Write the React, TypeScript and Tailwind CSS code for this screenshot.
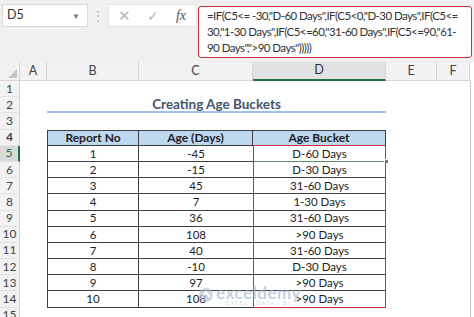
import React from 'react';

const FONT = { fontFamily: 'Lato, "Open Sans", sans-serif' };

const rows: [number, number, string][] = [
  [1, -45, 'D-60 Days'],
  [2, -15, 'D-30 Days'],
  [3, 45, '31-60 Days'],
  [4, 7, '1-30 Days'],
  [5, 36, '31-60 Days'],
  [6, 108, '>90 Days'],
  [7, 40, '31-60 Days'],
  [8, -10, 'D-30 Days'],
  [9, 97, '>90 Days'],
  [10, 108, '>90 Days'],
];

function RowHead({ n, active }: { n: number; active?: boolean }) {
  return (
    <div
      className={
        'w-[20px] shrink-0 flex items-center justify-center text-[12px] border-b border-[#e1e1e1] ' +
        (active
          ? 'bg-[#d9d9d9] border-r-2 border-r-[#217346] text-[#217346]'
          : 'bg-[#f2f2f2] border-r border-r-[#d4d4d4] text-[#444]')
      }
    >
      {n}
    </div>
  );
}

function ColHead({ label, w, active }: { label: string; w: string; active?: boolean }) {
  return (
    <div
      className={
        w +
        ' shrink-0 flex items-center justify-center text-[12.5px] border-r border-[#d4d4d4] ' +
        (active ? 'bg-[#e1e1e1] border-b-2 border-b-[#217346] text-[#333]' : 'bg-[#f2f2f2] border-b border-b-[#d4d4d4] text-[#444]')
      }
    >
      {label}
    </div>
  );
}

function Blank({ w }: { w: string }) {
  return <div className={w + ' shrink-0'} />;
}

export default function App() {
  return (
    <div className="w-[474px] h-[317px] overflow-hidden bg-white text-[#222]" style={FONT}>
      {/* formula bar */}
      <div className="h-[62px] bg-[#f0f0f0] flex items-start pt-[4px]">
        <div className="ml-[2px] w-[86px] h-[23px] bg-white border border-[#d9d9d9] flex items-center justify-between pl-[4px] pr-[7px] text-[12.5px] text-[#333]">
          <span>D5</span>
          <span className="text-[8px] text-[#777]">▼</span>
        </div>
        <div className="w-[20px] h-[23px] flex items-center justify-center text-[#b0b0b0] text-[12px]">⋮</div>
        <div className="w-[89px] h-[23px] bg-white border border-[#e3e3e3] flex items-center text-[#b5b5b5]">
          <span className="w-[30px] text-center text-[15px] leading-none">✕</span>
          <span className="w-[28px] text-center text-[14px] leading-none">✓</span>
          <span className="w-[28px] text-center text-[14px] italic text-[#555] leading-none" style={{ fontFamily: '"Liberation Serif", serif' }}>
            fx
          </span>
        </div>
        <div className="ml-[1px] mt-[2px] w-[274px] h-[52px] bg-white border-[1.5px] border-[#c9303e] rounded-[3px] px-[8px] pt-[1px] text-[11.5px] tracking-[-0.55px] leading-[16px] text-[#333] whitespace-nowrap overflow-hidden">
          <div>{'=IF(C5<= -30,"D-60 Days",IF(C5<0,"D-30 Days",IF(C5<='}</div>
          <div>{'30,"1-30 Days",IF(C5<=60,"31-60 Days",IF(C5<=90,"61-'}</div>
          <div>{'90 Days",">90 Days")))))'}</div>
        </div>
      </div>

      {/* sheet */}
      <div className="relative">
        <div className="flex h-[19px]">
          <div className="w-[20px] shrink-0 bg-[#f2f2f2] border-r border-b border-[#d4d4d4] flex items-end justify-end p-[2px]">
            <svg width="9" height="9" viewBox="0 0 9 9">
              <path d="M9 0 L9 9 L0 9 Z" fill="#c4c4c4" />
            </svg>
          </div>
          <ColHead label="A" w="w-[27px]" />
          <ColHead label="B" w="w-[92px]" />
          <ColHead label="C" w="w-[114px]" />
          <ColHead label="D" w="w-[133px]" active />
          <ColHead label="E" w="w-[51px]" />
          <ColHead label="F" w="w-[33px]" />
        </div>

        <div className="border-r border-[#c8c8c8] w-[471px]">
          {/* row 1 */}
          <div className="flex h-[16.2px]">
            <RowHead n={1} />
          </div>
          {/* row 2 title */}
          <div className="flex h-[16.2px]">
            <RowHead n={2} />
            <Blank w="w-[27px]" />
            <div className="w-[339px] shrink-0 border-b-2 border-[#9dc3e6] flex items-center justify-center font-bold text-[13.5px] text-[#44546a]">
              Creating Age Buckets
            </div>
          </div>
          {/* row 3 */}
          <div className="flex h-[16.2px]">
            <RowHead n={3} />
          </div>
          {/* row 4 header */}
          <div className="flex h-[16.2px] text-[12px] font-bold text-[#222]">
            <RowHead n={4} />
            <Blank w="w-[27px]" />
            <div className="w-[92px] shrink-0 bg-[#bdd7ee] border border-[#3f3f3f] flex items-center justify-center">Report No</div>
            <div className="w-[114px] shrink-0 bg-[#bdd7ee] border-y border-r border-[#3f3f3f] flex items-center justify-center">Age (Days)</div>
            <div className="w-[133px] shrink-0 bg-[#bdd7ee] border-t border-r border-[#3f3f3f] border-b border-b-[#c9303e] flex items-center justify-center">Age Bucket</div>
          </div>
          {rows.map(([no, age, bucket], i) => {
            const first = i === 0;
            const last = i === rows.length - 1;
            return (
              <div key={no} className="flex h-[16.2px] text-[11.5px] text-[#222]">
                <RowHead n={i + 5} active={first} />
                <Blank w="w-[27px]" />
                <div className="w-[92px] shrink-0 border-x border-b border-[#3f3f3f] flex items-center justify-center">{no}</div>
                <div className="w-[114px] shrink-0 border-b border-[#3f3f3f] flex items-center justify-center">{age}</div>
                <div
                  className={
                    'relative w-[133px] shrink-0 border-x-[1.5px] border-x-[#c9303e] border-b flex items-center justify-center ' +
                    (first ? 'border-b-[#5d8a6a] ' : last ? 'border-b-[1.5px] border-b-[#c9303e] ' : 'border-b-[#3f3f3f] ')
                  }
                >
                  {bucket}
                  {first && <div className="absolute right-[-4px] bottom-[-3px] w-[5px] h-[5px] bg-[#5d8a6a] border border-white" />}
                </div>
              </div>
            );
          })}
          <div className="flex h-[16.2px]">
            <RowHead n={15} />
          </div>
        </div>

        {/* watermark */}
        <div className="absolute left-[198px] top-[222px] flex items-center gap-[2px] opacity-60 pointer-events-none">
          <svg width="16" height="16" viewBox="0 0 16 16">
            <circle cx="8" cy="8" r="7" fill="#a9bcd6" />
            <path d="M4 10 L8 5 L12 10" stroke="#fff" strokeWidth="2" fill="none" />
          </svg>
          <div className="flex flex-col leading-none">
            <span className="text-[17px] font-bold text-[#9fb3cf] tracking-[0.5px]">exceldemy</span>
            <span className="text-[5px] text-[#9fb3cf] tracking-[1.5px] ml-[10px]">EXCEL · DATA · BI</span>
          </div>
        </div>
      </div>
    </div>
  );
}
